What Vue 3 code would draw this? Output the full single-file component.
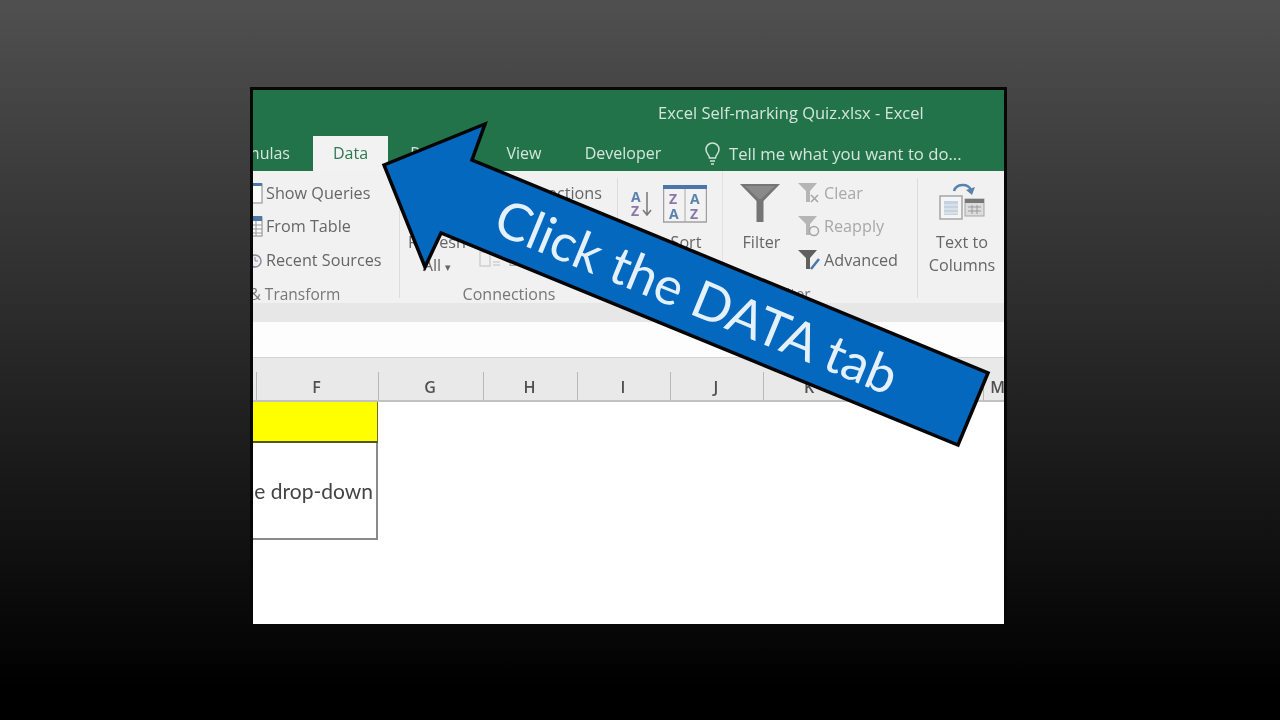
<template>
  <div class="stage">
    <div class="window">
      <header class="titlebar">
        <div class="title">Excel Self-marking Quiz.xlsx - Excel</div>
        <nav class="tabs">
          <span class="tab tab-formulas">Formulas</span>
          <span class="tab tab-data">Data</span>
          <span class="tab tab-review">Review</span>
          <span class="tab tab-view">View</span>
          <span class="tab tab-dev">Developer</span>
          <span class="tell">
            <svg width="17" height="24" viewBox="0 0 17 24" fill="none" stroke="#cfe2d7" stroke-width="1.5">
              <path d="M5.5 16c0-3-3.5-4.500-3.500-8.500a6.500 6.500 0 0 1 13 0c0 4-3.500 5.500-3.500 8.500z" />
              <path d="M6 19h5M7 22h3" />
            </svg>
            Tell me what you want to do...
          </span>
        </nav>
      </header>

      <section class="ribbon">
        <div class="group group-get">
          <div class="group-body">
            <ul class="cmds cmds-get">
              <li>
                <svg class="cmd-icon clipped" width="16" height="22" viewBox="0 0 16 22">
                  <rect x="1" y="2" width="13" height="19" fill="#fafafa" stroke="#888" />
                  <rect x="1" y="1" width="13" height="3" fill="#4a76a8" />
                </svg>
                Show Queries
              </li>
              <li>
                <svg class="cmd-icon clipped" width="16" height="22" viewBox="0 0 16 22">
                  <rect x="1" y="2" width="13" height="19" fill="#fafafa" stroke="#888" />
                  <rect x="1" y="1" width="13" height="5" fill="#4a76a8" />
                  <path d="M1 10h13M1 14h13M1 18h13M8 6v15" stroke="#999" />
                </svg>
                From Table
              </li>
              <li>
                <svg class="cmd-icon clipped" width="16" height="22" viewBox="0 0 16 22">
                  <circle cx="7" cy="12" r="6" fill="#eee" stroke="#8a8a9a" stroke-width="1.500" />
                  <path d="M7 8v4h3" fill="none" stroke="#8a8a9a" />
                </svg>
                Recent Sources
              </li>
            </ul>
          </div>
          <div class="group-label label-get">Get &amp; Transform</div>
        </div>

        <div class="group group-conn">
          <div class="group-body conn-body">
            <div class="big refresh">
              <span class="big-text">Refresh</span>
              <span class="big-text">All <small>▾</small></span>
            </div>
            <svg class="web-icon" width="24" height="18" viewBox="0 0 24 18" fill="none" stroke="#cfcfcf" stroke-width="1.500">
              <path d="M2 1h10v14H2z" />
              <path d="M15 11h7M15 14h7" />
            </svg>
            <ul class="cmds cmds-conn">
              <li>Connections</li>
              <li>Properties</li>
              <li class="faded">Edit Links</li>
            </ul>
          </div>
          <div class="group-label label-conn">Connections</div>
        </div>

        <div class="group group-sort">
          <div class="group-body sort-body">
            <div class="sort-part">
              <div class="sort-icons">
                <svg width="24" height="28" viewBox="0 0 24 28">
                  <text x="1" y="12" class="az az-blue">A</text>
                  <text x="1" y="26" class="az az-purple">Z</text>
                  <path d="M17 2v22M13 20l4 5 4-5" fill="none" stroke="#777" stroke-width="1.500" />
                </svg>
                <svg width="44" height="38" viewBox="0 0 44 38">
                  <rect x="0.500" y="2" width="43" height="35" fill="#f2f2f2" stroke="#a0a0a0" stroke-width="1.500" />
                  <rect x="0" y="0" width="44" height="4" fill="#4a76a8" />
                  <path d="M22 4v33" stroke="#aaa" />
                  <text x="6" y="19" class="az az-purple">Z</text>
                  <text x="6" y="34" class="az az-blue">A</text>
                  <text x="27" y="19" class="az az-blue">A</text>
                  <text x="27" y="34" class="az az-purple">Z</text>
                </svg>
              </div>
              <span class="big-text sort-word">Sort</span>
            </div>
            <div class="filter-part">
              <div class="big filter-big">
                <svg width="42" height="42" viewBox="0 0 42 42">
                  <path d="M1 2h40L24.500 19v21h-7V19z" fill="#757575" />
                  <path d="M6 4h30L22 17h-2z" fill="#8a8a8a" />
                </svg>
                <span class="big-text filter-word">Filter</span>
              </div>
              <ul class="cmds cmds-filter">
                <li class="faded">
                  <svg class="filter-icon" width="24" height="24" viewBox="0 0 24 24">
                    <path d="M1 2h19l-7 8v11h-4V10z" fill="#b5b5b5" />
                    <path d="M14 14l7 7M21 14l-7 7" stroke="#a5a5a5" stroke-width="1.500" />
                  </svg>
                  Clear
                </li>
                <li class="faded">
                  <svg class="filter-icon" width="24" height="24" viewBox="0 0 24 24">
                    <path d="M1 2h19l-7 8v11h-4V10z" fill="#b5b5b5" />
                    <circle cx="17" cy="17" r="4.500" fill="none" stroke="#a5a5a5" stroke-width="1.500" />
                  </svg>
                  Reapply
                </li>
                <li>
                  <svg class="filter-icon" width="24" height="24" viewBox="0 0 24 24">
                    <path d="M1 2h19l-7 8v11h-4V10z" fill="#5f5f5f" />
                    <path d="M14 21l8-10" stroke="#4a76a8" stroke-width="2.500" />
                  </svg>
                  Advanced
                </li>
              </ul>
            </div>
          </div>
          <div class="group-label label-sort">Sort &amp; Filter</div>
        </div>

        <div class="group group-text">
          <div class="big columns">
            <svg width="46" height="38" viewBox="0 0 46 38">
              <path d="M15 9a9 8 0 0 1 17-1" fill="none" stroke="#5a82ad" stroke-width="2.500" />
              <path d="M27 8l6 5 3-8z" fill="#5a82ad" />
              <rect x="1" y="14" width="22" height="23" fill="#f5f5f5" stroke="#a5a5a5" stroke-width="1.500" />
              <path d="M5 19h14v14H5z" fill="#c4d2e2" />
              <path d="M5 23h14M5 27h14M5 31h14" stroke="#eee" />
              <rect x="26" y="17" width="19" height="17" fill="#dcdcdc" stroke="#a5a5a5" />
              <rect x="26" y="17" width="19" height="4" fill="#777" />
              <path d="M29 25h13M29 29h13M33 23v9M38 23v9" stroke="#999" />
            </svg>
            <span class="big-text">Text to</span>
            <span class="big-text">Columns</span>
          </div>
        </div>
      </section>

      <div class="ribbon-strip"></div>
      <div class="formula-bar"></div>

      <div class="col-headers">
        <div v-for="col in columns" :key="col.name" class="col-head" :style="{ width: col.width + 'px' }">
          {{ col.name }}
        </div>
      </div>

      <div class="sheet">
        <div class="cell-head"></div>
        <div class="cell-body"><span>Use the drop-down</span></div>
      </div>
    </div>

    <svg class="arrow" width="1280" height="720" viewBox="0 0 1280 720">
      <path
        d="M384 165 L485 124 L472 160 L988 373 L958 445 L441 233 L425 267 Z"
        fill="#0468bf"
        stroke="#050505"
        stroke-width="3.500"
        stroke-linejoin="miter"
      />
      <text class="arrow-text" transform="translate(491 232) rotate(22.4)">Click the DATA tab</text>
    </svg>
  </div>
</template>

<script setup>
const columns = [
  { name: '', width: 4 },
  { name: 'F', width: 122 },
  { name: 'G', width: 105 },
  { name: 'H', width: 94 },
  { name: 'I', width: 93 },
  { name: 'J', width: 93 },
  { name: 'K', width: 93 },
  { name: 'L', width: 127 },
  { name: 'M', width: 30 },
]
</script>

<style>
html,
body {
  margin: 0;
  background: #000;
}
</style>

<style scoped>
.stage {
  position: relative;
  width: 1280px;
  height: 720px;
  padding: 87px 0 0 250px;
  box-sizing: border-box;
  overflow: hidden;
  background: linear-gradient(#505050 0, #000 690px);
  font-family: "Open Sans", "Liberation Sans", sans-serif;
}

.window {
  width: 757px;
  height: 538px;
  box-sizing: border-box;
  border: 3px solid #070707;
  border-bottom-width: 1px;
  background: #fff;
  overflow: hidden;
  filter: blur(0.6px);
}

.titlebar {
  height: 81px;
  background: #23734a;
  color: #d4e6db;
  font-size: 16px;
}

.title {
  height: 46px;
  line-height: 46px;
  padding-left: 405px;
  font-size: 16.500px;
  white-space: nowrap;
}

.tabs {
  display: flex;
  height: 35px;
  line-height: 35px;
  white-space: nowrap;
}

.tab {
  flex: none;
  text-align: center;
}

.tab-formulas {
  display: flex;
  justify-content: flex-end;
  width: 60px;
  padding-right: 23px;
  box-sizing: border-box;
  overflow: hidden;
}

.tab-data {
  width: 75px;
  background: #f2f2f2;
  color: #2c7a50;
}

.tab-review {
  width: 97px;
}

.tab-view {
  width: 78px;
}

.tab-dev {
  width: 120px;
}

.tell {
  display: flex;
  align-items: center;
  gap: 8px;
  margin-left: 21px;
  font-size: 16.700px;
}

.ribbon {
  display: flex;
  height: 132px;
  background: #f1f1f1;
  color: #666;
  font-size: 16.200px;
}

.group {
  flex: none;
  box-sizing: border-box;
  white-space: nowrap;
  overflow: hidden;
  position: relative;
}

.group::after {
  content: "";
  position: absolute;
  right: 0;
  top: 7px;
  height: 120px;
  width: 1px;
  background: #dcdcdc;
}

.group-get {
  width: 147px;
}

.group-conn {
  width: 218px;
}

.group-sort {
  width: 300px;
}

.group-text {
  width: 86px;
}

.group-text::after {
  display: none;
}

.group-body {
  height: 114px;
}

.group-label {
  height: 18px;
  line-height: 18px;
  text-align: center;
  font-size: 15.500px;
  color: #777;
}

.label-get {
  text-align: left;
  margin-left: -33px;
}

.label-conn {
  font-size: 16px;
}

.cmds {
  list-style: none;
  margin: 0;
  padding: 5px 0 0;
}

.cmds li {
  display: flex;
  align-items: center;
  height: 33.500px;
}

.cmds .faded {
  color: #a8a8a8;
}

.cmds-get {
  padding-left: 13px;
}

.cmd-icon {
  flex: none;
}

.clipped {
  margin-left: -18px;
  margin-right: 2px;
}

.conn-body {
  display: flex;
}

.big {
  display: flex;
  flex-direction: column;
  align-items: center;
}

.big-text {
  line-height: 23px;
}

.big-text small {
  font-size: 11px;
}

.refresh {
  width: 72px;
  padding: 60px 0 0 2px;
  box-sizing: border-box;
}

.web-icon {
  margin-top: 80px;
  margin-left: 6px;
  flex: none;
}

.cmds-conn {
  padding-left: 6px;
}

.sort-body {
  display: flex;
}

.sort-part {
  flex: none;
  width: 105px;
  height: 114px;
  padding-top: 14px;
  box-sizing: border-box;
  text-align: center;
  border-right: 1px solid #e2e2e2;
}

.sort-icons {
  display: flex;
  align-items: center;
  gap: 9px;
  padding-left: 12px;
}

.sort-word {
  display: block;
  margin-top: 8px;
  padding-left: 32px;
}

.az {
  font-size: 14px;
  font-weight: 700;
}

.az-blue {
  fill: #5a82ad;
}

.az-purple {
  fill: #8a78a8;
}

.filter-part {
  display: flex;
}

.filter-big {
  width: 74px;
  padding-top: 11px;
  box-sizing: border-box;
  gap: 7px;
}

.filter-word {
  padding-left: 3px;
}

.cmds-filter li {
  gap: 3px;
}

.filter-icon {
  flex: none;
}

.columns {
  padding: 11px 0 0 2px;
}

.columns svg {
  margin-bottom: 11px;
}

.ribbon-strip {
  height: 19px;
  background: #e7e7e7;
}

.formula-bar {
  height: 36px;
  box-sizing: border-box;
  background: #fdfdfd;
  border-bottom: 1px solid #d4d4d4;
}

.col-headers {
  display: flex;
  height: 44px;
  box-sizing: border-box;
  padding-top: 14px;
  background: #e9e9e9;
  border-bottom: 2px solid #c2c2c2;
  color: #505050;
  font-size: 16px;
  font-weight: 600;
  line-height: 30px;
}

.col-head {
  flex: none;
  box-sizing: border-box;
  padding-right: 2px;
  text-align: center;
  border-right: 1px solid #b8b8b8;
}

.sheet {
  width: 125px;
}

.cell-head {
  height: 41px;
  background: #ffff00;
  border-right: 1px solid #6b6b20;
  border-bottom: 2px solid #55551a;
  box-sizing: border-box;
}

.cell-body {
  display: flex;
  justify-content: flex-end;
  align-items: center;
  height: 97px;
  box-sizing: border-box;
  overflow: hidden;
  padding-right: 3px;
  border-right: 2px solid #8a8a8a;
  border-bottom: 2px solid #8a8a8a;
  color: #444;
  font-family: Lato, "Open Sans", sans-serif;
  font-size: 21px;
  white-space: nowrap;
}

.arrow {
  position: absolute;
  left: 0;
  top: 0;
}

.arrow-text {
  fill: #e4f1fa;
  font-family: Lato, "Open Sans", sans-serif;
  font-size: 52px;
}
</style>
